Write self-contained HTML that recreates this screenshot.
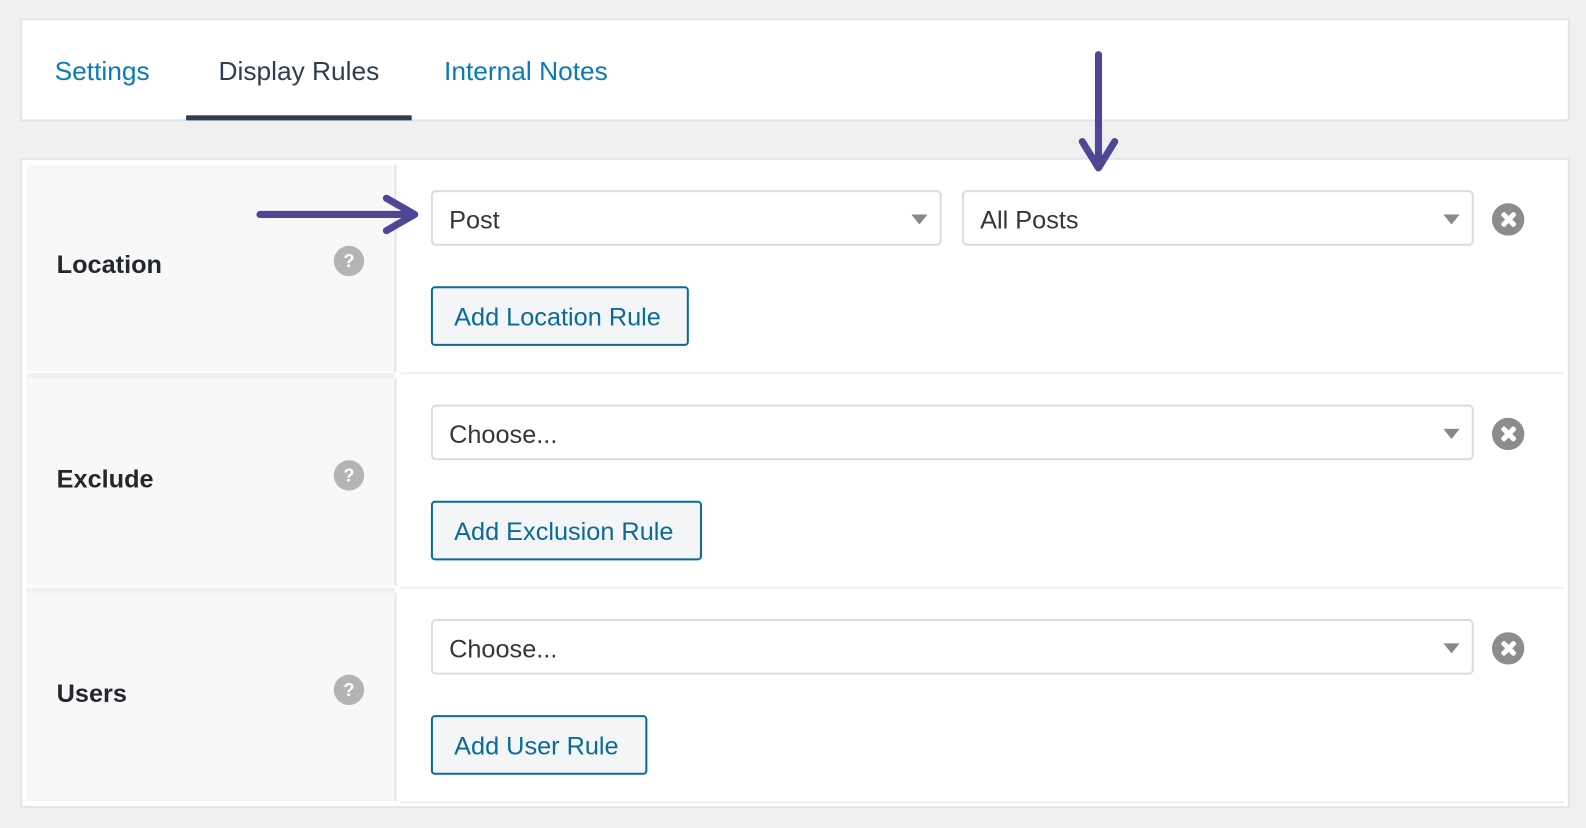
<!DOCTYPE html><html><head><style>
body{margin:0;width:1586px;height:828px;background:#f0f0f1;font-family:"Liberation Sans",sans-serif;position:relative;overflow:hidden}
#w{position:absolute;left:0;top:0;width:1568px;height:819px;transform:scale(1.0115);transform-origin:0 0}
.a{position:absolute}
.panel{background:#fff;border:2px solid #dfe5ec;box-sizing:border-box}
.tab{position:absolute;top:55px;font-size:26px;color:#0a7bb8}
.lc{position:absolute;left:26px;width:364px;background:#f8f8f8;border-right:2px solid #e5e5e5}
.lbl{position:absolute;left:30px;font-size:25px;font-weight:bold;color:#23282d}
.help{position:absolute;left:304px;width:30px;height:30px;border-radius:50%;background:#b4b4b4;color:#fff;font-size:18px;font-weight:bold;text-align:center;line-height:30px}
.sel{position:absolute;height:55px;border:2px solid #dcdcdc;border-radius:5px;box-sizing:border-box;background:#fff;font-size:25px;color:#32373c;padding-left:16px;line-height:57px}
.sel:after{content:"";position:absolute;right:12px;top:22px;border-left:8px solid transparent;border-right:8px solid transparent;border-top:10px solid #888}
.btn{position:absolute;left:426px;height:59px;border:2px solid #0a6a9a;border-radius:4px;box-sizing:border-box;background:#f3f5f6;color:#0a6a9a;font-size:25px;line-height:59px;padding:0 26px 0 21px}
.x{position:absolute;left:1475px;width:32px;height:32px;border-radius:50%;background:#8c8c8c}
.x:before,.x:after{content:"";position:absolute;left:14px;top:7px;width:5px;height:18px;background:#fff;border-radius:2px;transform:rotate(45deg)}
.x:after{transform:rotate(-45deg)}
.sep{position:absolute;left:396px;width:1150px;height:2px;background:#eeeeee}
</style></head><body><div id="w">
<div class="a panel" style="left:20px;top:18px;width:1532px;height:102px"></div>
<div class="tab" style="left:54px">Settings</div>
<div class="tab" style="left:216px;color:#2c3e50">Display Rules</div>
<div class="tab" style="left:439px">Internal Notes</div>
<div class="a" style="left:184px;top:114px;width:223px;height:5px;background:#2c3e50"></div>

<div class="a panel" style="left:20px;top:156px;width:1532px;height:643px"></div>
<div class="lc" style="top:163px;height:205px"><div class="lbl" style="top:85px">Location</div><div class="help" style="top:80px">?</div></div>
<div class="lc" style="top:374px;height:205px"><div class="lbl" style="top:86px">Exclude</div><div class="help" style="top:81px">?</div></div>
<div class="lc" style="top:586px;height:206px"><div class="lbl" style="top:86px">Users</div><div class="help" style="top:81px">?</div></div>
<div class="a" style="left:26px;top:369px;width:364px;height:5px;background:#f0f0f0"></div>
<div class="a" style="left:26px;top:581px;width:364px;height:5px;background:#f0f0f0"></div>
<div class="sep" style="top:368px"></div><div class="sep" style="top:580px"></div><div class="sep" style="top:792px"></div>

<div class="sel" style="left:426px;top:188px;width:505px">Post</div>
<div class="sel" style="left:951px;top:188px;width:506px">All Posts</div>
<div class="x" style="top:201px"></div>
<div class="btn" style="top:283px">Add Location Rule</div>

<div class="sel" style="left:426px;top:400px;width:1031px">Choose...</div>
<div class="x" style="top:413px"></div>
<div class="btn" style="top:495px">Add Exclusion Rule</div>

<div class="sel" style="left:426px;top:612px;width:1031px">Choose...</div>
<div class="x" style="top:625px"></div>
<div class="btn" style="top:707px">Add User Rule</div>

<svg class="a" style="left:0;top:0" width="1568" height="819">
<g stroke="#4f4796" stroke-width="7" stroke-linecap="round" stroke-linejoin="round" fill="none">
<path d="M257 212H408M382 196L410 212L382 228"/>
<path d="M1086 54V166M1070 140L1086 166L1102 140"/>
</g></svg>
</div></body></html>
